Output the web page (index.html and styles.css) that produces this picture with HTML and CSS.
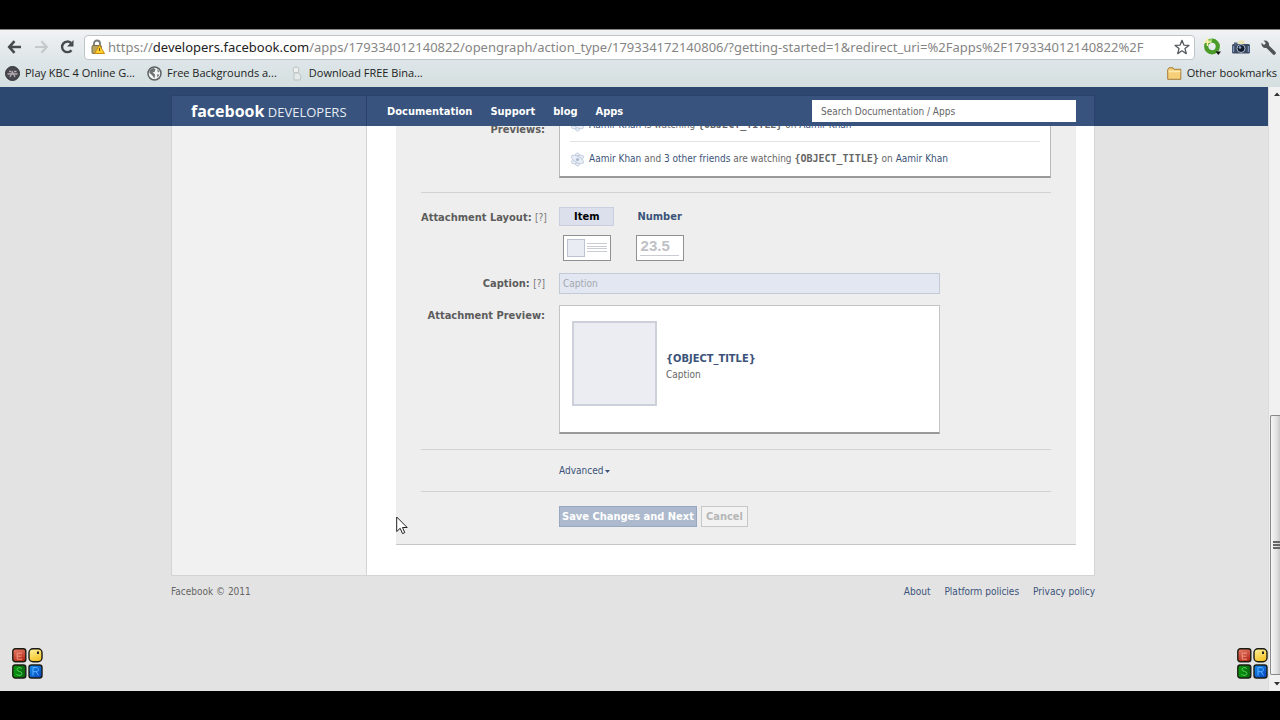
FILE: index.html
```html
<!DOCTYPE html>
<html lang="en">
<head>
<meta charset="utf-8">
<title>Facebook Developers</title>
<link rel="stylesheet" href="styles.css">
</head>
<body>
<svg class="defs" aria-hidden="true">
  <defs>
    <linearGradient id="gr" x1="0" y1="0" x2="0.4" y2="1"><stop offset="0" stop-color="#e8806c"/><stop offset="1" stop-color="#b82c1c"/></linearGradient>
    <linearGradient id="gy" x1="0" y1="0" x2="0.4" y2="1"><stop offset="0" stop-color="#fff3a0"/><stop offset="1" stop-color="#f5c52a"/></linearGradient>
    <linearGradient id="gg" x1="0" y1="0" x2="1" y2="0"><stop offset="0" stop-color="#0a9a10"/><stop offset="1" stop-color="#0a6410"/></linearGradient>
    <linearGradient id="gb" x1="0" y1="0" x2="1" y2="1"><stop offset="0" stop-color="#1590ee"/><stop offset="1" stop-color="#0a3fb8"/></linearGradient>
    <symbol id="atom" viewBox="0 0 15 15">
      <g fill="#e9edf5" stroke="#bfc9dc"><ellipse cx="7.5" cy="7.5" rx="3" ry="6.6"/><ellipse cx="7.5" cy="7.5" rx="3" ry="6.6" transform="rotate(60 7.5 7.5)"/><ellipse cx="7.5" cy="7.5" rx="3" ry="6.6" transform="rotate(120 7.5 7.5)"/></g>
      <circle cx="7.5" cy="7.5" r="1.6" fill="#a9b7d1"/>
    </symbol>
    <symbol id="tiles" viewBox="0 0 31 31">
      <g stroke="#1b1b12" stroke-width="1.4">
        <rect x="0.8" y="0.8" width="13" height="13" rx="2.5" fill="url(#gr)"/>
        <rect x="17" y="0.8" width="13" height="13" rx="4" fill="url(#gy)"/>
        <rect x="0.8" y="17" width="13" height="13" rx="2.5" fill="url(#gg)"/>
        <rect x="17" y="17" width="13" height="13" rx="2.5" fill="url(#gb)"/>
      </g>
      <path d="M10 5.200H5.200v6H10M5.200 8.200H9.500" fill="none" stroke="#f09a84"/>
      <path d="M26 3.500v2.500" stroke="#222" stroke-width="2"/>
      <path d="M9.800 20.500C8 19 5 19.500 5 21.500c0 2.500 5 1.500 5 4 0 2-3.500 2.400-5.500 1" fill="none" stroke="#52d858"/>
      <path d="M21 27.500v-8h3.200c3 0 3 4.200 0 4.200H21m3.200 0 2.400 3.800" fill="none" stroke="#58b0ff"/>
    </symbol>
  </defs>
</svg>

<div class="screen">
  <header class="browser">
    <div class="toolbar">
      <button class="icon-btn" aria-label="Back"><svg width="16" height="14" viewBox="0 0 16 14"><path d="M7.500 1.200 2.200 7l5.300 5.800M2.500 7H14" fill="none" stroke="#484b4d" stroke-width="2.600"/></svg></button>
      <button class="icon-btn forward" aria-label="Forward"><svg width="16" height="14" viewBox="0 0 16 14"><path d="M7.500 1.200 12.800 7l-5.300 5.800M12.500 7H1" fill="none" stroke="#c5c9ca" stroke-width="2.200"/></svg></button>
      <button class="icon-btn reload" aria-label="Reload"><svg width="16" height="16" viewBox="0 0 16 16"><path d="M12.500 11.200A5.300 5.300 0 1 1 12 4" fill="none" stroke="#484b4d" stroke-width="2.400"/><path d="M14.500 1v6.500H8z" fill="#484b4d"/></svg></button>
      <div class="address">
        <svg width="14" height="16" viewBox="0 0 14 16"><path d="M3 8V4.500a3 3 0 0 1 6 0V8" fill="none" stroke="#77797a" stroke-width="1.800"/><rect x="1" y="6.500" width="9.500" height="8" rx="1" fill="#b9a45e" stroke="#736c50"/><path d="M8.500 6 13.500 14.500h-10z" fill="#ffcf2e" stroke="#c68a10"/><path d="M8.500 9v3" stroke="#705010"/></svg>
        <div class="url">https://<span>developers.facebook.com</span>/apps/179334012140822/opengraph/action_type/179334172140806/?getting-started=1&amp;redirect_uri=%2Fapps%2F179334012140822%2F</div>
        <svg width="16" height="16" viewBox="0 0 16 16"><path d="m8 1.300 1.900 4.800 5 .3-3.900 3.200 1.300 5L8 11.800l-4.300 2.800 1.300-5L1.100 6.400l5-.3z" fill="#fff" stroke="#55595e" stroke-width="1.300" stroke-linejoin="round"/></svg>
      </div>
      <div class="tools">
        <button class="icon-btn" aria-label="Downloader"><svg width="18" height="18" viewBox="0 0 18 18"><circle cx="9" cy="8.500" r="5.800" fill="none" stroke="#4b9b2b" stroke-width="4.200"/><path d="M4 5a6 6 0 0 1 5-3" fill="none" stroke="#9cd673" stroke-width="2"/><path d="M4.500 0v8M.5 4h8" stroke="#fff3a8" stroke-width="1.600"/><path d="M12.500 13.500H18l-2.700 3.500z" fill="#111"/></svg></button>
        <button class="icon-btn" aria-label="Capture"><svg width="18" height="16" viewBox="0 0 18 16"><path d="M7 1.500h5L13 6H6z" fill="#e9e3b3"/><rect y="5" width="18" height="9.500" rx="1.500" fill="#3c4a60"/><rect x="2" y="3.500" width="3.500" height="3" fill="#53627a"/><path d="M1.500 7v6M16.500 7v6" stroke="#7a93bd" stroke-width="1.500"/><circle cx="9" cy="9.500" r="4" fill="#141b28" stroke="#a7b9d6"/><circle cx="8" cy="8.500" r="1.300" fill="#86a3d3"/></svg></button>
        <button class="icon-btn" aria-label="Settings"><svg width="15" height="15" viewBox="0 0 15 15"><path d="M5.500 5.500 13 13" stroke="#505456" stroke-width="3.600" stroke-linecap="round"/><path d="M2.500.6 4.600 2.700 4.300 4.600 2.600 4.700.6 2.800C-.2 6 2.500 8.700 5.500 7.800L8 5.300C8.700 2.500 6 -.3 2.500.6z" fill="#505456"/></svg></button>
      </div>
    </div>
    <nav class="bookmarks">
      <a href="#"><svg width="15" height="15" viewBox="0 0 15 15"><circle cx="7.500" cy="7.500" r="7" fill="#47474e" stroke="#33333a"/><path d="M2.500 8h10M4 5.500h2.500M9 5.500h2.500M5 11l2.500-5 2.500 5" fill="none" stroke="#b5acb2" stroke-width="1.300"/></svg>Play KBC 4 Online G...</a>
      <a href="#"><svg width="15" height="15" viewBox="0 0 15 15"><circle cx="7.500" cy="7.500" r="6.500" fill="#f2f3f3" stroke="#5f6365" stroke-width="1.500"/><path d="M2.500 4.500 6 2l2.500 1-1 3-2 .5 2.500 2-.5 4L5 9 2.500 7zM10 3l2.500 2.500-1.500 1zM10 8.500l2.500 0-2 3z" fill="#6c7072"/></svg>Free Backgrounds a...</a>
      <a href="#"><svg width="15" height="15" viewBox="0 0 15 15"><circle cx="7" cy="4" r="3" fill="#eef0f0" stroke="#bcc2c4"/><path d="M5 7h5l2 3-1 4H5z" fill="#e7eaeb" stroke="#bcc2c4"/></svg>Download FREE Bina...</a>
      <a href="#" class="other"><svg width="15" height="13" viewBox="0 0 15 13"><path d="M.7 2.500 2 .8h4l1 1.500h6.800v10H.7z" fill="#f6cf78" stroke="#a47c37"/><path d="M1.500 4.500h11.800" stroke="#fdeab3" stroke-width="1.500"/></svg>Other bookmarks</a>
    </nav>
  </header>

  <div class="viewport">
    <div class="page">
      <header class="site-header">
        <div class="site-bar">
          <a class="brand" href="#"><b>facebook</b> DEVELOPERS</a>
          <nav class="site-nav"><a href="#">Documentation</a><a href="#">Support</a><a href="#">blog</a><a href="#">Apps</a></nav>
          <input class="search" type="text" aria-label="Search Documentation / Apps" placeholder="Search Documentation / Apps">
        </div>
      </header>

      <div class="body">
        <div class="content">
          <aside class="sidebar"></aside>
          <main class="main">
            <form class="panel">
              <div class="row previews">
                <div class="label">Previews:</div>
                <div class="stories">
                  <div class="story"><svg><use href="#atom"/></svg><p><a href="#">Aamir Khan</a> is watching <code>{OBJECT_TITLE}</code> on <a href="#">Aamir Khan</a></p></div>
                  <div class="story"><svg><use href="#atom"/></svg><p><a href="#">Aamir Khan</a> and <a href="#">3 other friends</a> are watching <code>{OBJECT_TITLE}</code> on <a href="#">Aamir Khan</a></p></div>
                </div>
              </div>
              <div class="row section layout-row">
                <div class="label">Attachment Layout: <a class="help" href="#">[?]</a></div>
                <div class="layouts">
                  <div class="option selected">
                    <button type="button">Item</button>
                    <svg width="48" height="26" viewBox="0 0 48 26"><rect x=".5" y=".5" width="47" height="25" fill="#fff" stroke="#8f9092"/><rect x="4.500" y="4.500" width="17" height="17" fill="#e9ecf3" stroke="#bcc3cf"/><path d="M24 8.500h20M24 11.500h20M24 13.500h20M24 16.500h20" stroke="#c9ccd2"/></svg>
                  </div>
                  <div class="option">
                    <button type="button">Number</button>
                    <div class="number-thumb">23.5</div>
                  </div>
                </div>
              </div>
              <div class="row caption-row">
                <div class="label"><label for="caption">Caption:</label> <a class="help" href="#">[?]</a></div>
                <input id="caption" class="caption" type="text" placeholder="Caption">
              </div>
              <div class="row">
                <div class="label">Attachment Preview:</div>
                <div class="attachment">
                  <div class="thumb"></div>
                  <div class="details"><a class="object" href="#">{OBJECT_TITLE}</a><div>Caption</div></div>
                </div>
              </div>
              <div class="row section advanced">
                <div class="label"></div>
                <a href="#">Advanced<svg width="5" height="3" viewBox="0 0 5 3"><path d="M0 0h5L2.500 3z" fill="#3b5379"/></svg></a>
              </div>
              <div class="row section actions">
                <div class="label"></div>
                <button type="button" class="save">Save Changes and Next</button>
                <button type="button" class="cancel">Cancel</button>
              </div>
            </form>
          </main>
        </div>

        <footer class="site-footer">
          <span>Facebook © 2011</span>
          <nav><a href="#">About</a><a href="#">Platform policies</a><a href="#">Privacy policy</a></nav>
        </footer>
      </div>

      <svg class="tiles left"><use href="#tiles"/></svg>
      <svg class="tiles right"><use href="#tiles"/></svg>
      <svg class="pointer" width="12" height="19" viewBox="0 0 12 19"><path d="M.7 1v14.500l3.500-3.200 2.300 5.300 2.300-1-2.300-5.100h4.700z" fill="#fff" stroke="#222"/></svg>
    </div>
    <div class="scrollbar">
      <svg width="12" height="11" viewBox="0 0 12 11"><path d="M5 9h6L8 5.500z" fill="#333"/></svg>
      <div class="track"><div class="thumb-grip"><i></i><i></i><i></i></div></div>
      <svg width="12" height="16" viewBox="0 0 12 16"><path d="M5 7h6l-3 3.500z" fill="#333"/></svg>
    </div>
  </div>
</div>
</body>
</html>
```
FILE: styles.css
```css
* { box-sizing: border-box; }
body {
  margin: 0;
  background: #000;
  color: #666;
  font: 10px/16px "DejaVu Sans Condensed", "Noto Sans", sans-serif;
}
a { color: #3b5379; text-decoration: none; }
p { margin: 0; }
button, input { font: inherit; }
svg { flex: none; }
.defs { position: absolute; width: 0; height: 0; }

.screen {
  display: flex;
  flex-direction: column;
  min-height: 100vh;
  padding: 29px 0;
}

/* Browser chrome */
.browser {
  background: linear-gradient(#f1f2f3, #dde5e8 55%, #d5dfdf);
  border-top: 1px solid #8b8580;
}
.toolbar {
  display: flex;
  align-items: center;
  height: 34px;
  padding: 0 4px 0 7px;
}
.icon-btn {
  display: flex;
  padding: 0;
  border: 0;
  background: none;
}
.forward { margin-left: 11px; }
.reload { margin-left: 9px; }
.address {
  display: flex;
  flex: 1;
  align-items: center;
  min-width: 0;
  height: 25px;
  margin-left: 9px;
  padding: 0 4px 0 6px;
  border: 1px solid #bfc6c9;
  border-radius: 4px;
  background: #fff;
}
.url {
  flex: 1;
  min-width: 0;
  margin: 0 4px 0 3px;
  overflow: hidden;
  color: #858585;
  font-family: "Noto Sans", "Open Sans", sans-serif;
  font-size: 13px;
  line-height: 22px;
  white-space: nowrap;
}
.url span { color: #222; }
.tools {
  display: flex;
  align-items: center;
  gap: 11px;
  margin-left: 8px;
}
.bookmarks {
  display: flex;
  align-items: center;
  gap: 12px;
  height: 23px;
  padding: 0 3px 5px 5px;
  font-family: "Open Sans", "Noto Sans", sans-serif;
  font-size: 11px;
}
.bookmarks a {
  display: flex;
  align-items: center;
  gap: 5px;
  color: #222;
}
.bookmarks .other { margin-left: auto; }

/* Page viewport */
.viewport {
  display: flex;
  flex: 1;
}
.page {
  position: relative;
  flex: 1;
  min-width: 0;
  background: #e3e3e3;
}
.body { padding-right: 2px; }
.site-header {
  position: relative;
  z-index: 1;
  padding: 8px 2px 0 0;
  background: #2c4770;
}
.site-bar {
  display: flex;
  align-items: center;
  max-width: 924px;
  height: 31px;
  margin: 0 auto;
  padding-right: 18px;
  border: 1px solid #2a426c;
  border-bottom: 0;
  background: #38537e;
}
.brand {
  align-self: stretch;
  width: 195px;
  padding-left: 19px;
  border-right: 1px solid #2a426c;
  color: #e6ebf4;
  font: 13px/30px "Open Sans", "Noto Sans", sans-serif;
  white-space: nowrap;
}
.brand b {
  color: #fff;
  font-size: 16px;
  font-weight: 700;
}
.site-nav {
  display: flex;
  flex: 1;
  gap: 18px;
  padding: 2px 0 0 20px;
}
.site-nav a {
  color: #fff;
}
.site-nav, .label, .option button, .object, .actions button {
  font-size: 11px;
  font-weight: bold;
}
.search {
  width: 264px;
  height: 22px;
  padding: 0 9px;
  border: 0;
  border-radius: 0;
  background: #fff;
}
.search::placeholder { color: #666; opacity: 1; }

.content {
  display: flex;
  max-width: 924px;
  margin: 0 auto;
  border: 1px solid #d4d4d4;
  border-top: 0;
}
.sidebar {
  width: 194px;
  background: #f1f1f1;
}
.main {
  flex: 1;
  min-width: 0;
  padding: 0 18px 30px 29px;
  border-left: 1px solid #d4d4d4;
  background: #fff;
}
.panel {
  padding: 0 25px 17px;
  border-bottom: 1px solid #c6c6c6;
  background: #eee;
}
.row {
  display: flex;
  align-items: flex-start;
}
.label {
  flex: none;
  width: 124px;
  margin-right: 14px;
  padding-top: 3px;
  color: #5c5c5c;
  text-align: right;
  white-space: nowrap;
}
.help {
  color: #777;
  font-size: 10px;
  font-weight: normal;
}
.section {
  padding-top: 14px;
  border-top: 1px solid #d2d2d2;
}

.previews { margin: -7px 0 14px; }
.stories {
  flex: 1;
  padding: 0 10px;
  border: 1px solid #b9b9b9;
  border-bottom: 2px solid #999;
  background: #fff;
}
.story {
  display: flex;
  align-items: center;
  gap: 4px;
  height: 35px;
}
.story:first-child {
  height: 21px;
  padding-bottom: 12px;
}
.story + .story { border-top: 1px solid #e2e2e2; }
.story svg { width: 15px; height: 15px; }
.story code {
  color: #666;
  font: bold 10px/16px "DejaVu Sans Mono", monospace;
}

.layout-row { margin-bottom: 12px; }
.layouts {
  display: flex;
  gap: 17px;
}
.option {
  display: flex;
  flex-direction: column;
  align-items: center;
  gap: 9px;
}
.option button {
  height: 19px;
  padding: 0 5px;
  border: 1px solid transparent;
  background: none;
  color: #3b5379;
  line-height: 17px;
}
.option.selected button {
  padding: 0 14px;
  border-color: #c9cfdf;
  background: #dbe0ec;
  color: #000;
}
.number-thumb {
  width: 48px;
  height: 26px;
  padding: 2px 4px;
  border: 1px solid #8f9092;
  background: linear-gradient(#c9ccd2, #c9ccd2) center 19px / 39px 1px no-repeat #fff;
  color: #bfc1c6;
  font: bold 15px/16px "Liberation Sans", sans-serif;
}

.caption-row { margin-bottom: 11px; }
.caption {
  width: 381px;
  height: 21px;
  padding: 0 3px;
  border: 1px solid #c2cad8;
  border-radius: 0;
  background: #e2e7f2;
}
.caption::placeholder { color: #a5a8ae; opacity: 1; }
.attachment {
  display: flex;
  align-items: center;
  gap: 9px;
  width: 381px;
  height: 129px;
  margin-bottom: 15px;
  padding: 0 12px 12px;
  border: 1px solid #c4c4c4;
  border-bottom: 2px solid #999;
  background: #fff;
}
.thumb {
  width: 85px;
  height: 85px;
  border: 2px solid #cbd0da;
  background: #ebedf3;
}
.details { padding-top: 8px; }
.advanced {
  padding: 13px 0 12px;
}
.advanced a {
  display: flex;
  align-items: center;
  gap: 2px;
}
.actions button {
  height: 21px;
  padding: 0 2px;
  border: 1px solid #98a8c0;
  background: #adb9cc;
  color: #fff;
  line-height: 19px;
}
.actions .cancel {
  margin-left: 4px;
  padding: 0 4px;
  border-color: #c8c8c8;
  background: #f2f2f2;
  color: #b6b6b6;
}

.site-footer {
  display: flex;
  justify-content: space-between;
  max-width: 924px;
  margin: 0 auto;
  padding: 8px 0;
}
.site-footer nav {
  display: flex;
  gap: 14px;
}

/* Items floating over the page */
.tiles {
  position: absolute;
  bottom: 12px;
  width: 31px;
  height: 31px;
}
.tiles.left { left: 12px; }
.tiles.right { right: 0; }
.pointer {
  position: absolute;
  left: 396px;
  top: 429px;
}

.scrollbar {
  display: flex;
  flex-direction: column;
  width: 12px;
  border-left: 1px solid #ddd;
  background: #f1f1f1;
}
.track {
  display: flex;
  flex: 1;
  flex-direction: column;
  justify-content: flex-end;
}
.thumb-grip {
  display: flex;
  flex-direction: column;
  align-items: flex-end;
  justify-content: center;
  gap: 1px;
  height: 45%;
  margin-left: 1px;
  border: 1px solid #888;
  border-right: 0;
  border-radius: 2px 0 0 2px;
  background: linear-gradient(90deg, #f6f6f6, #e2e2e2 60%, #c9c9c9);
}
.thumb-grip i {
  width: 7px;
  height: 2px;
  background: #666;
}
```
